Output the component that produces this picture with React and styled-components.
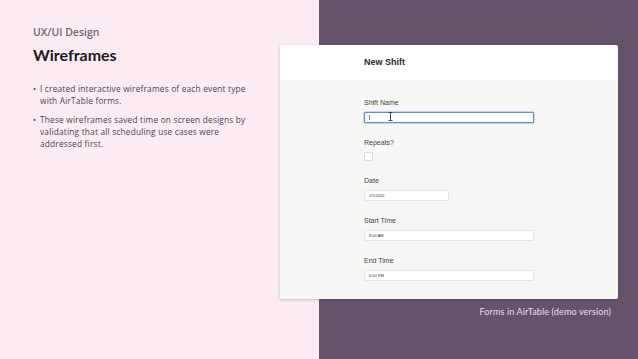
import React from "react";
import styled, { createGlobalStyle } from "styled-components";

const GlobalStyle = createGlobalStyle`
  html, body {
    margin: 0;
    padding: 0;
  }
  body {
    width: 638px;
    height: 359px;
    overflow: hidden;
    background: linear-gradient(to right, #fcebf3 319px, #65536b 319px);
  }
`;

const Page = styled.div`
  display: flex;
  height: 359px;
  font-family: "Open Sans", sans-serif;
`;

const LeftCol = styled.div`
  width: 217px;
  padding: 25px 30px 0 33px;
`;

const Eyebrow = styled.div`
  font-size: 10.5px;
  font-weight: 600;
  color: #6e6872;
  line-height: 14px;
`;

const Title = styled.h1`
  margin: 5px 0 0;
  font-family: Lato, "Open Sans", sans-serif;
  font-size: 16px;
  font-weight: 700;
  color: #1c1a1e;
  line-height: 22px;
`;

const Bullets = styled.ul`
  list-style: none;
  margin: 17px 0 0;
  padding: 0;
`;

const Bullet = styled.li`
  position: relative;
  padding-left: 7px;
  margin-bottom: 7px;
  font-size: 8.3px;
  letter-spacing: 0.2px;
  line-height: 12px;
  color: #4a4450;

  &::before {
    content: "•";
    position: absolute;
    left: 0;
    top: 0;
  }
`;

const RightCol = styled.div`
  display: flex;
  flex-direction: column;
  align-items: flex-end;
  padding-top: 45px;
  width: 338px;
`;

const Card = styled.div`
  width: 338px;
  height: 254px;
  border-radius: 2px;
  overflow: hidden;
  box-shadow: 0 1px 3px rgba(60, 40, 60, 0.25);
  font-family: "Liberation Sans", Arial, sans-serif;
  display: flex;
  flex-direction: column;
`;

const CardHeader = styled.div`
  height: 35px;
  background: #ffffff;
  display: flex;
  align-items: center;
  padding-left: 84px;
  font-size: 9px;
  font-weight: 600;
  color: #2a2a2a;
  padding-bottom: 2px;
  box-sizing: border-box;
`;

const CardBody = styled.div`
  flex: 1;
  background: #f7f7f6;
  padding: 19px 0 0 84px;
  display: flex;
  flex-direction: column;
`;

const Field = styled.div`
  display: flex;
  flex-direction: column;
  margin-bottom: 16px;
  position: relative;
`;

const Label = styled.div`
  font-size: 7px;
  color: #444;
  line-height: 8px;
  margin-bottom: 5px;
`;

const Input = styled.div`
  box-sizing: border-box;
  width: ${(p) => p.$w || 170}px;
  height: 11px;
  background: #fff;
  border: ${(p) => (p.$focus ? "1px solid #5b8fd8" : "1px solid #e6e6e6")};
  box-shadow: ${(p) => (p.$focus ? "0 0 0 0.5px #8fb4e8" : "none")};
  border-radius: 1px;
  font-size: 4px;
  color: #333;
  display: flex;
  align-items: center;
  padding-left: 4px;
`;

const Caret = styled.span`
  width: 0.6px;
  height: 5px;
  background: #888;
`;

const Checkbox = styled.div`
  width: 7px;
  height: 7px;
  background: #fff;
  border: 1px solid #ddd;
  border-radius: 1px;
`;

const Cursor = styled.svg`
  position: absolute;
  left: 24px;
  top: 13px;
`;

const Caption = styled.div`
  margin-top: 7px;
  margin-right: 7px;
  font-family: Lato, "Open Sans", sans-serif;
  font-size: 9.1px;
  color: #e9dbe9;
  letter-spacing: 0.1px;
`;

export default function App() {
  return (
    <>
      <GlobalStyle />
      <Page>
        <LeftCol>
          <Eyebrow>UX/UI Design</Eyebrow>
          <Title>Wireframes</Title>
          <Bullets>
            <Bullet>
              I created interactive wireframes of each event type with AirTable
              forms.
            </Bullet>
            <Bullet>
              These wireframes saved time on screen designs by validating that
              all scheduling use cases were addressed first.
            </Bullet>
          </Bullets>
        </LeftCol>
        <RightCol>
          <Card>
            <CardHeader>New Shift</CardHeader>
            <CardBody>
              <Field>
                <Label>Shift Name</Label>
                <Input $focus>
                  <Caret />
                </Input>
                <Cursor width="5" height="9" viewBox="0 0 5 9">
                  <path
                    d="M0.5 0.5h4M2.5 0.5v8M0.5 8.5h4"
                    stroke="#333"
                    strokeWidth="0.9"
                    fill="none"
                  />
                </Cursor>
              </Field>
              <Field>
                <Label>Repeats?</Label>
                <Checkbox />
              </Field>
              <Field>
                <Label>Date</Label>
                <Input $w={85}>2/1/2022</Input>
              </Field>
              <Field>
                <Label>Start Time</Label>
                <Input>8:00 AM</Input>
              </Field>
              <Field>
                <Label>End Time</Label>
                <Input>6:00 PM</Input>
              </Field>
            </CardBody>
          </Card>
          <Caption>Forms in AirTable (demo version)</Caption>
        </RightCol>
      </Page>
    </>
  );
}
